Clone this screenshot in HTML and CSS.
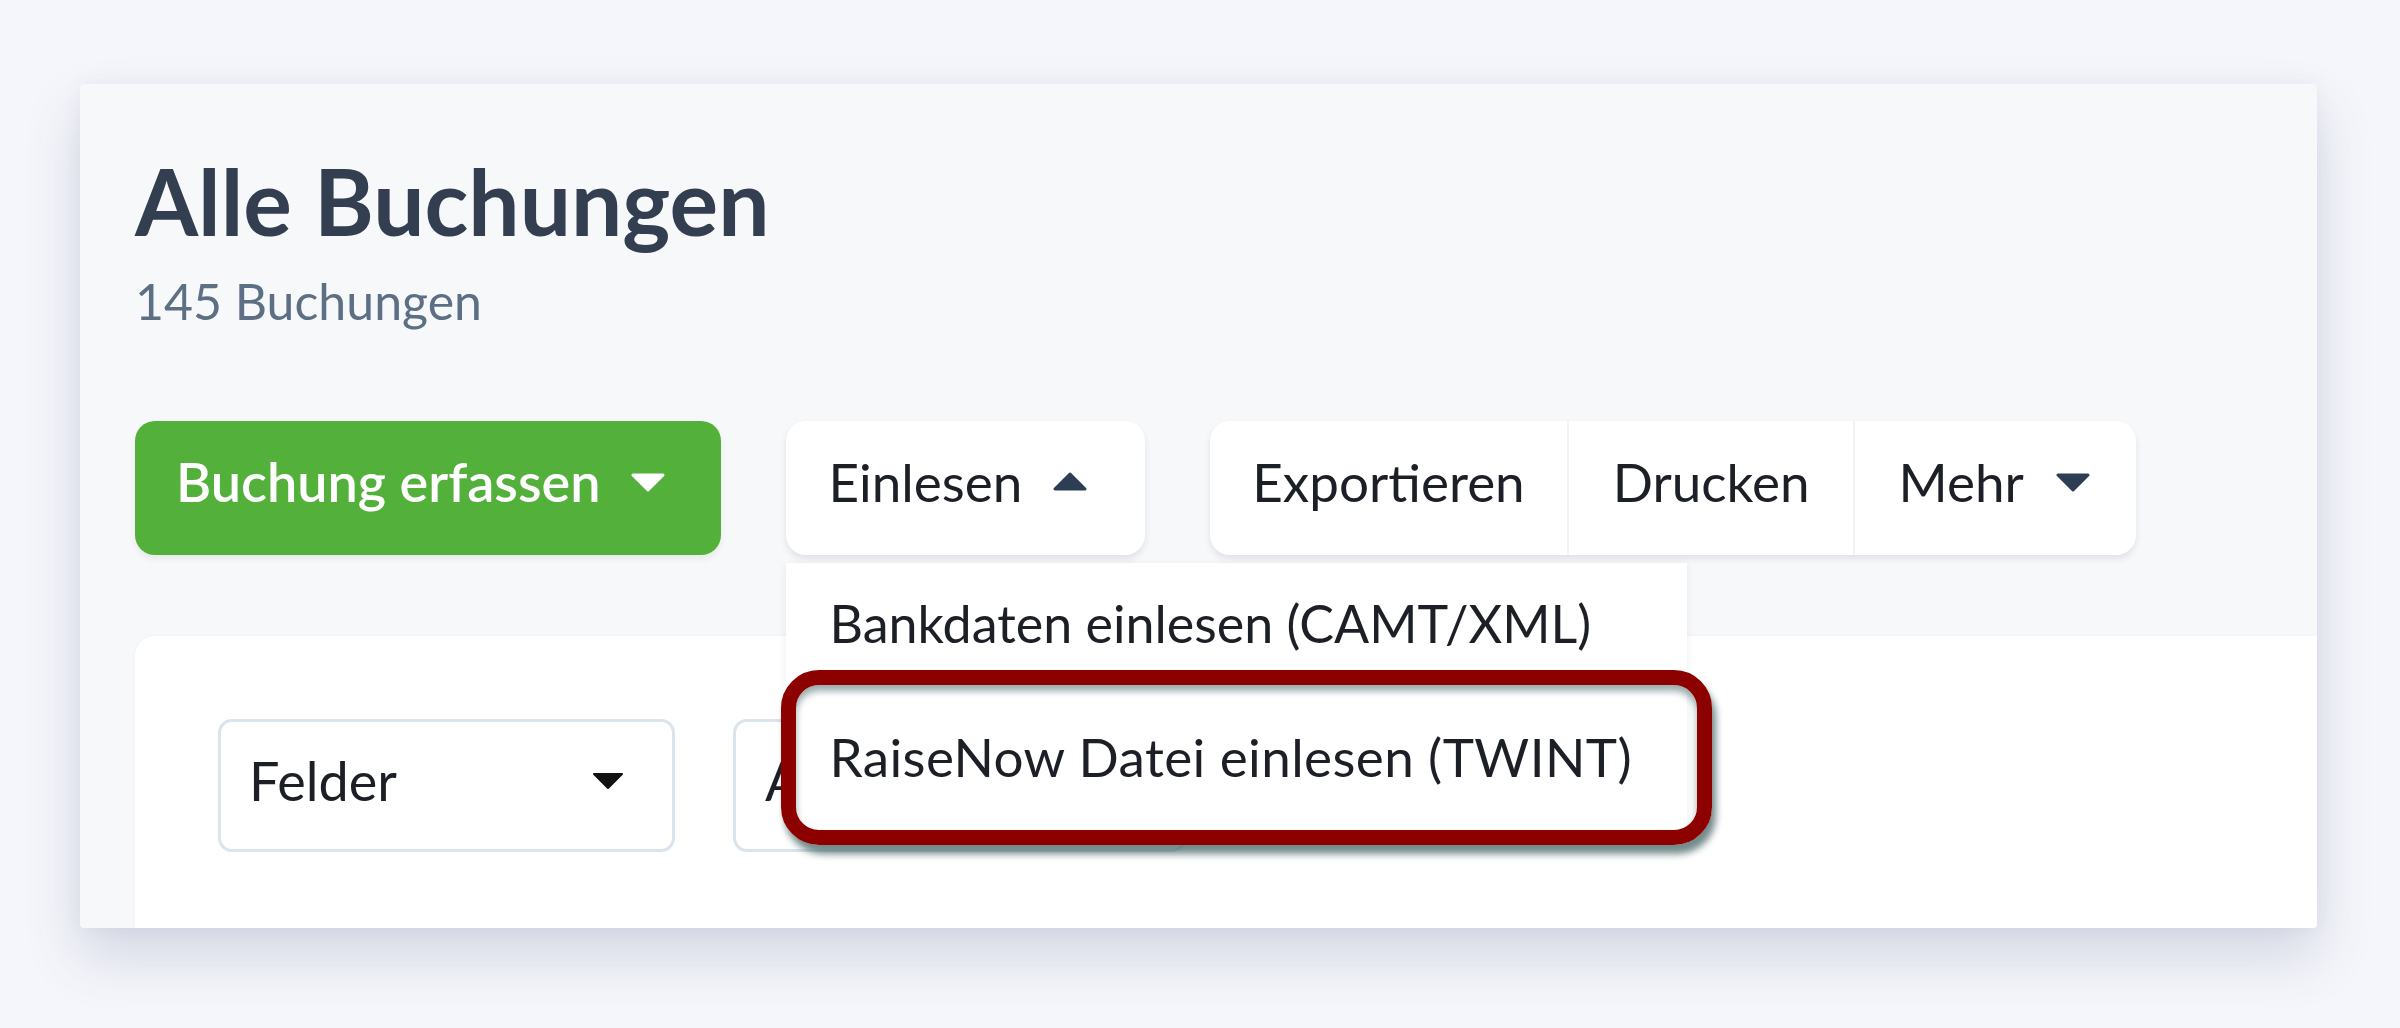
FILE: index.html
```html
<!DOCTYPE html>
<html lang="de">
<head>
<meta charset="utf-8">
<title>Alle Buchungen</title>
<link rel="stylesheet" href="styles.css">
</head>
<body>
<div class="card">
  <h1 class="title">Alle Buchungen</h1>
  <div class="subtitle">145 Buchungen</div>

  <div class="toolbar">
    <button class="btn btn-primary">
      <span class="btn-label">Buchung erfassen</span>
      <svg class="caret" width="36" height="20" viewBox="0 0 36 20"><polygon points="3,3 33,3 18,18" fill="#ffffff" stroke="#ffffff" stroke-width="3" stroke-linejoin="round"/></svg>
    </button>

    <div class="dropdown">
      <button class="btn btn-white">
        <span class="btn-label">Einlesen</span>
        <svg class="caret caret-up" width="36" height="20" viewBox="0 0 36 20"><polygon points="3,17 33,17 18,2" fill="#2d3e54" stroke="#2d3e54" stroke-width="3" stroke-linejoin="round"/></svg>
      </button>
      <div class="menu">
        <div class="menu-item">Bankdaten einlesen (CAMT/XML)</div>
        <div class="menu-item menu-item-raise">RaiseNow Datei einlesen (TWINT)</div>
        <div class="highlight"></div>
      </div>
    </div>

    <div class="btn-group">
      <button class="btn btn-seg btn-export"><span class="btn-label">Exportieren</span></button>
      <button class="btn btn-seg btn-print"><span class="btn-label">Drucken</span></button>
      <button class="btn btn-seg btn-more">
        <span class="btn-label">Mehr</span>
        <svg class="caret" width="36" height="20" viewBox="0 0 36 20"><polygon points="3,3 33,3 18,18" fill="#2d3e54" stroke="#2d3e54" stroke-width="3" stroke-linejoin="round"/></svg>
      </button>
    </div>
  </div>

  <div class="panel">
    <div class="filters">
      <div class="select select-fields">
        <span class="select-label">Felder</span>
        <svg class="select-caret" width="32" height="18" viewBox="0 0 32 18"><polygon points="2,2 30,2 16,16" fill="#111111" stroke="#111111" stroke-width="2" stroke-linejoin="round"/></svg>
      </div>
      <div class="select select-second">
        <span class="select-label">Alle</span>
      </div>
    </div>
  </div>
</div>
</body>
</html>
```

FILE: styles.css
```css
* {
  box-sizing: border-box;
}

html, body {
  margin: 0;
  padding: 0;
}

body {
  width: 2400px;
  height: 1028px;
  background: #f5f6fb;
  font-family: Lato, "Open Sans", "Liberation Sans", sans-serif;
  overflow: hidden;
  padding-top: 84px;
  padding-left: 80px;
}

.card {
  width: 2237px;
  height: 844px;
  background: #f7f8fa;
  border-radius: 4px;
  padding: 61px 0 0 55px;
  overflow: hidden;
  box-shadow: 0 28px 55px rgba(70, 78, 120, 0.19), 0 0 18px rgba(70, 78, 120, 0.06);
}

.title {
  margin: 0;
  font-size: 91px;
  line-height: 112px;
  font-weight: 700;
  color: #333e50;
  letter-spacing: 0;
}

.subtitle {
  margin-top: 14px;
  font-size: 50px;
  line-height: 60px;
  color: #5d6f84;
}

.toolbar {
  margin-top: 90px;
  display: flex;
  gap: 65px;
  height: 134px;
}

.btn {
  display: flex;
  align-items: center;
  height: 134px;
  border: 0;
  margin: 0;
  font-family: inherit;
  font-size: 53px;
  color: #1c1f25;
  background: #ffffff;
  border-radius: 20px;
  padding: 28px 57px 41px 42px;
  cursor: pointer;
}

.btn-label {
  line-height: 65px;
  white-space: nowrap;
}

.caret {
  display: block;
  margin-left: 30px;
  flex: none;
}

.btn-primary {
  background: #53b03a;
  color: #ffffff;
  font-size: 54px;
  font-weight: 600;
  padding-left: 41px;
  padding-right: 55px;
  box-shadow: 0 4px 6px rgba(40, 60, 40, 0.08);
}

.btn-white {
  box-shadow: 0 4px 6px rgba(30, 40, 60, 0.1);
}

.dropdown {
  position: relative;
}

.menu {
  position: absolute;
  top: 142px;
  left: 0;
  width: 901px;
  background: #ffffff;
  box-shadow: 0 2px 8px rgba(30, 40, 60, 0.08);
  z-index: 5;
}

.menu-item {
  font-size: 52px;
  line-height: 62px;
  padding: 29px 20px 43px 43px;
  color: #1c1f25;
  white-space: nowrap;
}

.menu-item-raise {
  font-size: 53px;
  letter-spacing: 0.4px;
}

.highlight {
  position: absolute;
  left: -5px;
  top: 107px;
  width: 931px;
  height: 175px;
  border: 15px solid #8c0000;
  border-radius: 38px;
  box-shadow: 4px 9px 7px rgba(70, 100, 100, 0.75), inset 0 6px 7px rgba(70, 100, 100, 0.55);
}

.btn-group {
  display: flex;
  background: #ffffff;
  border-radius: 20px;
  box-shadow: 0 4px 6px rgba(30, 40, 60, 0.1);
}

.btn-seg {
  background: transparent;
  border-radius: 0;
}

.btn-export {
  padding-left: 42px;
  padding-right: 42px;
  border-right: 2px solid #f1f3f6;
}

.btn-print {
  padding-left: 44px;
  padding-right: 43px;
  border-right: 2px solid #f1f3f6;
}

.btn-more {
  padding-left: 44px;
  padding-right: 45px;
}

.btn-more .caret {
  margin-left: 31px;
}

.panel {
  margin-top: 81px;
  height: 420px;
  background: #ffffff;
  border-radius: 20px 0 0 0;
  padding: 83px 0 0 83px;
  box-shadow: 0 0 4px rgba(30, 40, 60, 0.04);
}

.filters {
  display: flex;
  gap: 58px;
}

.select {
  display: flex;
  align-items: center;
  height: 133px;
  border: 3px solid #dbe4ec;
  border-radius: 14px;
  background: #ffffff;
  padding: 26px 48px 36px 28px;
  font-size: 54px;
  color: #1c1f25;
}

.select-fields {
  width: 457px;
  justify-content: space-between;
}

.select-second {
  width: 453px;
  padding-left: 29px;
}

.select-label {
  line-height: 65px;
  white-space: nowrap;
}

.select-caret {
  display: block;
  flex: none;
}
```
